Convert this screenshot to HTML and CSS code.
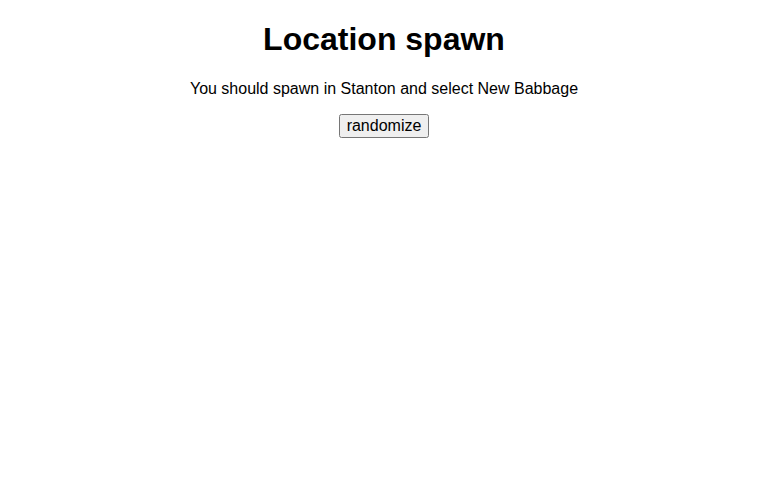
FILE: index.html
```html
<!DOCTYPE html>
<html lang="en">
<head>
  <meta charset="UTF-8" />
  <meta name="viewport" content="width=device-width, initial-scale=1.0" />
  <title>Location spawn</title>
  <link rel="stylesheet" href="styles.css">
</head>
<body>
  <h1>Location spawn</h1>
  <p id="result">You should spawn in Stanton and select New Babbage</p>
  <button class="randomize">randomize</button>
</body>
</html>
```

FILE: styles.css
```css
body {
  margin: 0;
  font-family: "Liberation Sans", Arial, sans-serif;
  text-align: center;
}

h1 {
  margin-top: 21.44px;
}

.randomize {
  font-family: inherit;
  font-size: 16px;
}
```
